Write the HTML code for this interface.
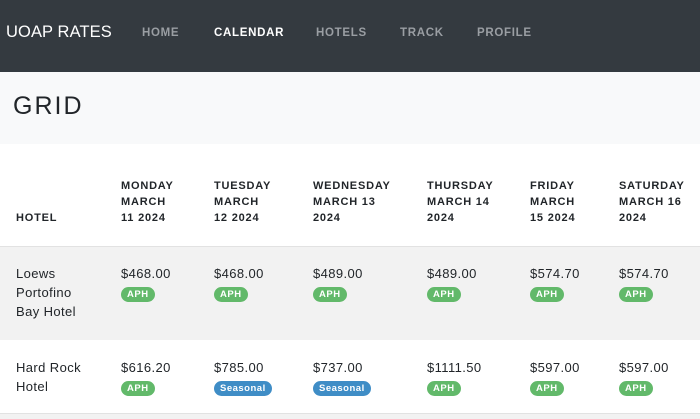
<!DOCTYPE html>
<html><head><style>
*{margin:0;padding:0;box-sizing:border-box}
body{width:700px;height:419px;overflow:hidden;font-family:"Liberation Sans",sans-serif;background:#fff;position:relative}
.nav{position:absolute;top:0;left:0;width:700px;height:72px;background:#343a40}
.a{position:absolute;white-space:nowrap}
.brand{left:6px;top:23px;color:#fff;font-size:16.5px;letter-spacing:.1px}
.ni{top:27px;font-size:11.5px;letter-spacing:.7px;color:#9a9ea3;font-weight:bold}
.title{position:absolute;top:72px;left:0;width:700px;height:72px;background:#f8f9fa}
.h1{left:13px;top:92px;font-size:25px;letter-spacing:2px;color:#212529}
.th{font-size:11px;font-weight:bold;letter-spacing:.8px;color:#212529;line-height:16px}
.r1{position:absolute;top:246px;left:0;width:700px;height:94px;background:#f2f2f2;border-top:1px solid #e2e2e2}
.r2b{position:absolute;top:413px;left:0;width:700px;height:6px;background:#f2f2f2;border-top:1px solid #e2e2e2}
.td{font-size:13px;color:#212529;line-height:19px;letter-spacing:.4px}
.b{display:inline-block;font-size:9.5px;font-weight:bold;color:#fff;border-radius:8px;height:15px;line-height:15px;padding:0 6px;letter-spacing:.5px;margin-top:1px}
.g{background:#62b96a}.s{background:#3f8dc6}
</style></head><body>
<div class="nav"></div>
<div class="a brand">UOAP RATES</div>
<div class="a ni" style="left:142px">HOME</div>
<div class="a ni" style="left:214px;color:#fff">CALENDAR</div>
<div class="a ni" style="left:316px">HOTELS</div>
<div class="a ni" style="left:400px">TRACK</div>
<div class="a ni" style="left:477px">PROFILE</div>
<div class="title"></div>
<div class="a h1">GRID</div>
<div class="a th" style="left:16px;top:210px">HOTEL</div>
<div class="a th" style="left:121px;top:178px">MONDAY<br>MARCH<br>11 2024</div>
<div class="a th" style="left:214px;top:178px">TUESDAY<br>MARCH<br>12 2024</div>
<div class="a th" style="left:313px;top:178px">WEDNESDAY<br>MARCH 13<br>2024</div>
<div class="a th" style="left:427px;top:178px">THURSDAY<br>MARCH 14<br>2024</div>
<div class="a th" style="left:530px;top:178px">FRIDAY<br>MARCH<br>15 2024</div>
<div class="a th" style="left:619px;top:178px">SATURDAY<br>MARCH 16<br>2024</div>
<div class="r1"></div>
<div class="a td" style="left:16px;top:264px">Loews<br>Portofino<br>Bay Hotel</div>
<div class="a td" style="left:121px;top:264px">$468.00<br><span class="b g">APH</span></div>
<div class="a td" style="left:214px;top:264px">$468.00<br><span class="b g">APH</span></div>
<div class="a td" style="left:313px;top:264px">$489.00<br><span class="b g">APH</span></div>
<div class="a td" style="left:427px;top:264px">$489.00<br><span class="b g">APH</span></div>
<div class="a td" style="left:530px;top:264px">$574.70<br><span class="b g">APH</span></div>
<div class="a td" style="left:619px;top:264px">$574.70<br><span class="b g">APH</span></div>
<div class="a td" style="left:16px;top:358px">Hard Rock<br>Hotel</div>
<div class="a td" style="left:121px;top:358px">$616.20<br><span class="b g">APH</span></div>
<div class="a td" style="left:214px;top:358px">$785.00<br><span class="b s">Seasonal</span></div>
<div class="a td" style="left:313px;top:358px">$737.00<br><span class="b s">Seasonal</span></div>
<div class="a td" style="left:427px;top:358px">$1111.50<br><span class="b g">APH</span></div>
<div class="a td" style="left:530px;top:358px">$597.00<br><span class="b g">APH</span></div>
<div class="a td" style="left:619px;top:358px">$597.00<br><span class="b g">APH</span></div>
<div class="r2b"></div>
</body></html>
